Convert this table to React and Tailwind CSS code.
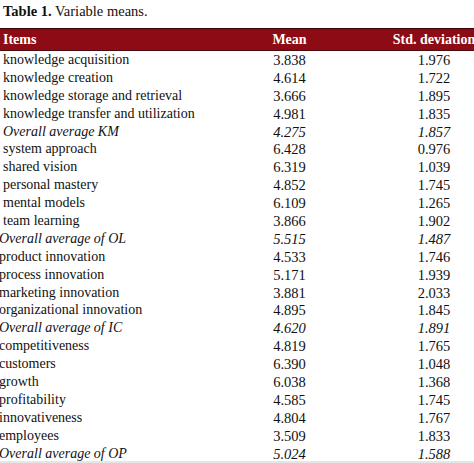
const rows = [
  ["knowledge acquisition", "3.838", "1.976", false, 3],
  ["knowledge creation", "4.614", "1.722", false, 3],
  ["knowledge storage and retrieval", "3.666", "1.895", false, 3],
  ["knowledge transfer and utilization", "4.981", "1.835", false, 3],
  ["Overall average KM", "4.275", "1.857", true, 3],
  ["system approach", "6.428", "0.976", false, 3],
  ["shared vision", "6.319", "1.039", false, 3],
  ["personal mastery", "4.852", "1.745", false, 3],
  ["mental models", "6.109", "1.265", false, 3],
  ["team learning", "3.866", "1.902", false, 3],
  ["Overall average of OL", "5.515", "1.487", true, 0],
  ["product innovation", "4.533", "1.746", false, 0],
  ["process innovation", "5.171", "1.939", false, 0],
  ["marketing innovation", "3.881", "2.033", false, 0],
  ["organizational innovation", "4.895", "1.845", false, 0],
  ["Overall average of IC", "4.620", "1.891", true, 0],
  ["competitiveness", "4.819", "1.765", false, 0],
  ["customers", "6.390", "1.048", false, 0],
  ["growth", "6.038", "1.368", false, 0],
  ["profitability", "4.585", "1.745", false, 0],
  ["innovativeness", "4.804", "1.767", false, 0],
  ["employees", "3.509", "1.833", false, 0],
  ["Overall average of OP", "5.024", "1.588", true, 0],
];

export default function App() {
  return (
    <div
      className="w-[474px] h-[463px] overflow-hidden bg-white text-[#111] relative"
      style={{ fontFamily: '"Liberation Serif", "Times New Roman", serif' }}
    >
      <div className="h-[28px] pl-[3px] pt-[1px] text-[14.5px] leading-[20px]">
        <span className="font-bold">Table 1.</span> Variable means.
      </div>
      <div className="w-[540px]">
        <div className="grid grid-cols-[240px_99px_190px] h-[23px] items-center bg-[#8c0b14] border-t-[1.5px] border-t-[#3a0306] border-b border-b-[#4a0a0e] text-white font-bold text-[14px]">
          <div className="pl-[3px]">Items</div>
          <div className="text-center">Mean</div>
          <div className="text-center">Std. deviation</div>
        </div>
        {rows.map(([name, mean, sd, it, pl]) => (
          <div
            key={name}
            className={`grid grid-cols-[240px_99px_190px] h-[17.9px] items-center text-[14px] leading-[18px] ${it ? "italic" : ""}`}
          >
            <div className={pl ? "pl-[3px]" : "-ml-[1px]"}>{name}</div>
            <div className="text-center text-[14.5px]">{mean}</div>
            <div className="text-center text-[14.5px]">{sd}</div>
          </div>
        ))}
      </div>
      <div className="absolute left-0 right-0 bottom-0 h-[2px] bg-[#e6e6e6]" />
    </div>
  );
}
